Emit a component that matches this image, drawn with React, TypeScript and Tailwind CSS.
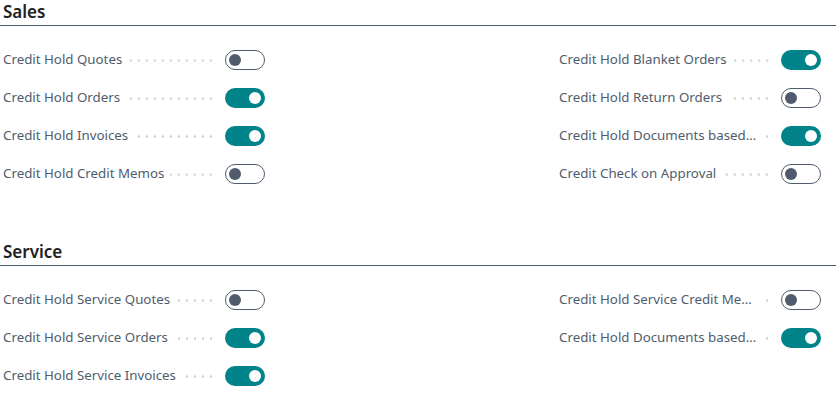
import React from "react";

type Field = { label: string; on: boolean };

const sales: [Field[], Field[]] = [
  [
    { label: "Credit Hold Quotes", on: false },
    { label: "Credit Hold Orders", on: true },
    { label: "Credit Hold Invoices", on: true },
    { label: "Credit Hold Credit Memos", on: false },
  ],
  [
    { label: "Credit Hold Blanket Orders", on: true },
    { label: "Credit Hold Return Orders", on: false },
    { label: "Credit Hold Documents based on Payment Terms", on: true },
    { label: "Credit Check on Approval", on: false },
  ],
];

const service: [Field[], Field[]] = [
  [
    { label: "Credit Hold Service Quotes", on: false },
    { label: "Credit Hold Service Orders", on: true },
    { label: "Credit Hold Service Invoices", on: true },
  ],
  [
    { label: "Credit Hold Service Credit Memos", on: false },
    { label: "Credit Hold Documents based on Payment Terms", on: true },
  ],
];

function Toggle({ on }: { on: boolean }) {
  return on ? (
    <div className="flex h-[20px] w-[40px] shrink-0 items-center justify-end rounded-full bg-[#008489] pr-[4px]">
      <div className="h-[12px] w-[12px] rounded-full bg-white" />
    </div>
  ) : (
    <div className="flex h-[20px] w-[40px] shrink-0 items-center rounded-full border border-[#505c6d] bg-white pl-[3px]">
      <div className="h-[12px] w-[12px] rounded-full bg-[#505c6d]" />
    </div>
  );
}

function FieldRow({ field }: { field: Field }) {
  return (
    <div className="flex h-[38px] w-[262px] items-center">
      <div className="flex min-w-0 flex-1 items-center">
        <span className="truncate whitespace-nowrap text-[13.3px] text-[#505c6d]">{field.label}</span>
        <div className="ml-[6px] mr-[2px] h-[3px] min-w-[8px] flex-1 bg-[radial-gradient(circle,#cfcfcf_1px,transparent_1.3px)] bg-[length:8px_3px] bg-[position:right_center] bg-repeat-x" />
      </div>
      <div className="ml-[8px]">
        <Toggle on={field.on} />
      </div>
    </div>
  );
}

function Section({ title, cols }: { title: string; cols: [Field[], Field[]] }) {
  return (
    <div>
      <div className="border-b border-[#505c6d] pb-[2px] pl-[3px]">
        <h2 className="text-[17px] font-semibold leading-[23px] text-[#212121]">{title}</h2>
      </div>
      <div className="flex pl-[3px] pt-[15px]">
        <div className="w-[556px]">
          {cols[0].map((f) => (
            <FieldRow key={f.label} field={f} />
          ))}
        </div>
        <div>
          {cols[1].map((f) => (
            <FieldRow key={f.label + "r"} field={f} />
          ))}
        </div>
      </div>
    </div>
  );
}

export default function App() {
  return (
    <div className="h-[405px] w-[836px] overflow-hidden bg-white font-['Noto_Sans','Open_Sans',sans-serif]">
      <Section title="Sales" cols={sales} />
      <div className="h-[47px]" />
      <Section title="Service" cols={service} />
    </div>
  );
}
